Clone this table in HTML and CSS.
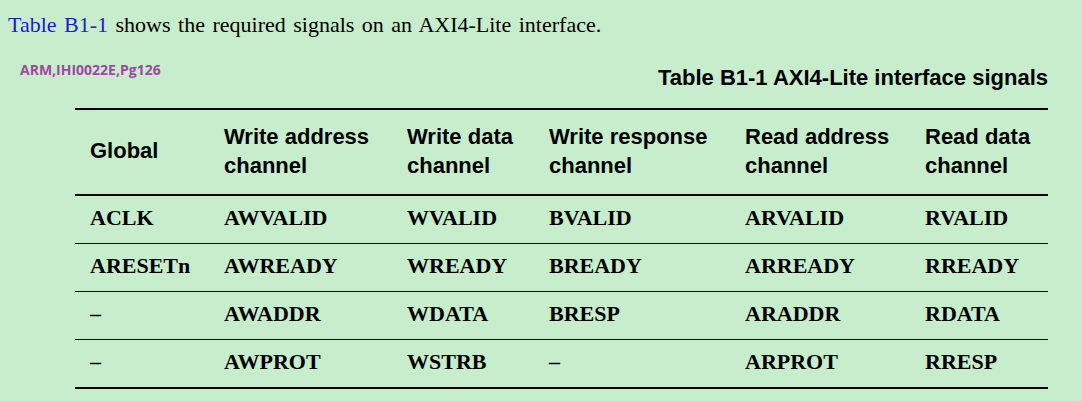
FILE: index.html
```html
<!DOCTYPE html>
<html>
<head>
<meta charset="utf-8">
<link rel="stylesheet" href="styles.css">
</head>
<body>
<p class="intro"><a class="xref">Table B1-1</a> shows the required signals on an AXI4-Lite interface.</p>
<div class="caption-row">
  <span class="source">ARM,IHI0022E,Pg126</span>
  <span class="title">Table B1-1 AXI4-Lite interface signals</span>
</div>
<div class="table-wrap">
<table class="signals">
  <colgroup>
    <col class="c1"><col class="c2"><col class="c3"><col class="c4"><col class="c5"><col class="c6">
  </colgroup>
  <thead>
    <tr>
      <th>Global</th>
      <th>Write address channel</th>
      <th>Write data channel</th>
      <th>Write response channel</th>
      <th>Read address channel</th>
      <th>Read data channel</th>
    </tr>
  </thead>
  <tbody>
    <tr><td>ACLK</td><td>AWVALID</td><td>WVALID</td><td>BVALID</td><td>ARVALID</td><td>RVALID</td></tr>
    <tr><td>ARESETn</td><td>AWREADY</td><td>WREADY</td><td>BREADY</td><td>ARREADY</td><td>RREADY</td></tr>
    <tr><td>–</td><td>AWADDR</td><td>WDATA</td><td>BRESP</td><td>ARADDR</td><td>RDATA</td></tr>
    <tr><td>–</td><td>AWPROT</td><td>WSTRB</td><td>–</td><td>ARPROT</td><td>RRESP</td></tr>
  </tbody>
</table>
</div>
</body>
</html>
```
FILE: styles.css
```css
html, body {
  margin: 0;
  padding: 0;
  background: #c7edcc;
}
body {
  width: 1082px;
  height: 401px;
  overflow: hidden;
  font-family: "Liberation Serif", "Times New Roman", serif;
  color: #000;
}
.intro {
  margin: 12px 0 0 8px;
  font-size: 22px;
  line-height: 25px;
  word-spacing: 2px;
}
.xref {
  color: #1c1cc8;
  text-decoration: none;
}
.caption-row {
  display: flex;
  justify-content: space-between;
  align-items: flex-start;
  margin: 0 34px 0 20px;
  height: 48px;
  padding-top: 23px;
}
.source {
  font-family: "Open Sans", "DejaVu Sans", sans-serif;
  font-weight: 700;
  font-size: 14px;
  line-height: 18px;
  color: #a347a3;
  padding-top: 1px;
}
.title {
  font-family: "Liberation Sans", Arial, sans-serif;
  font-weight: 700;
  font-size: 22px;
  line-height: 25px;
  padding-top: 5px;
}
.table-wrap {
  margin-left: 75px;
  width: 973px;
}
.signals {
  width: 973px;
  table-layout: fixed;
  border-collapse: collapse;
  border-top: 2px solid #000;
  border-bottom: 2px solid #000;
}
.c1 { width: 134px; }
.c2 { width: 183px; }
.c3 { width: 142px; }
.c4 { width: 196px; }
.c5 { width: 180px; }
.c6 { width: 138px; }
.signals th {
  font-family: "Liberation Sans", Arial, sans-serif;
  font-weight: 700;
  font-size: 22px;
  line-height: 29px;
  text-align: left;
  padding: 0 15px 3px;
  height: 81px;
  vertical-align: middle;
  border-bottom: 2px solid #000;
}
.signals td {
  font-family: "Liberation Serif", "Times New Roman", serif;
  font-weight: 700;
  font-size: 22px;
  line-height: 25px;
  padding: 0 15px 4px;
  height: 43px;
  vertical-align: middle;
  border-bottom: 1px solid #000;
}
.signals tbody tr:last-child td {
  border-bottom: none;
}
```
